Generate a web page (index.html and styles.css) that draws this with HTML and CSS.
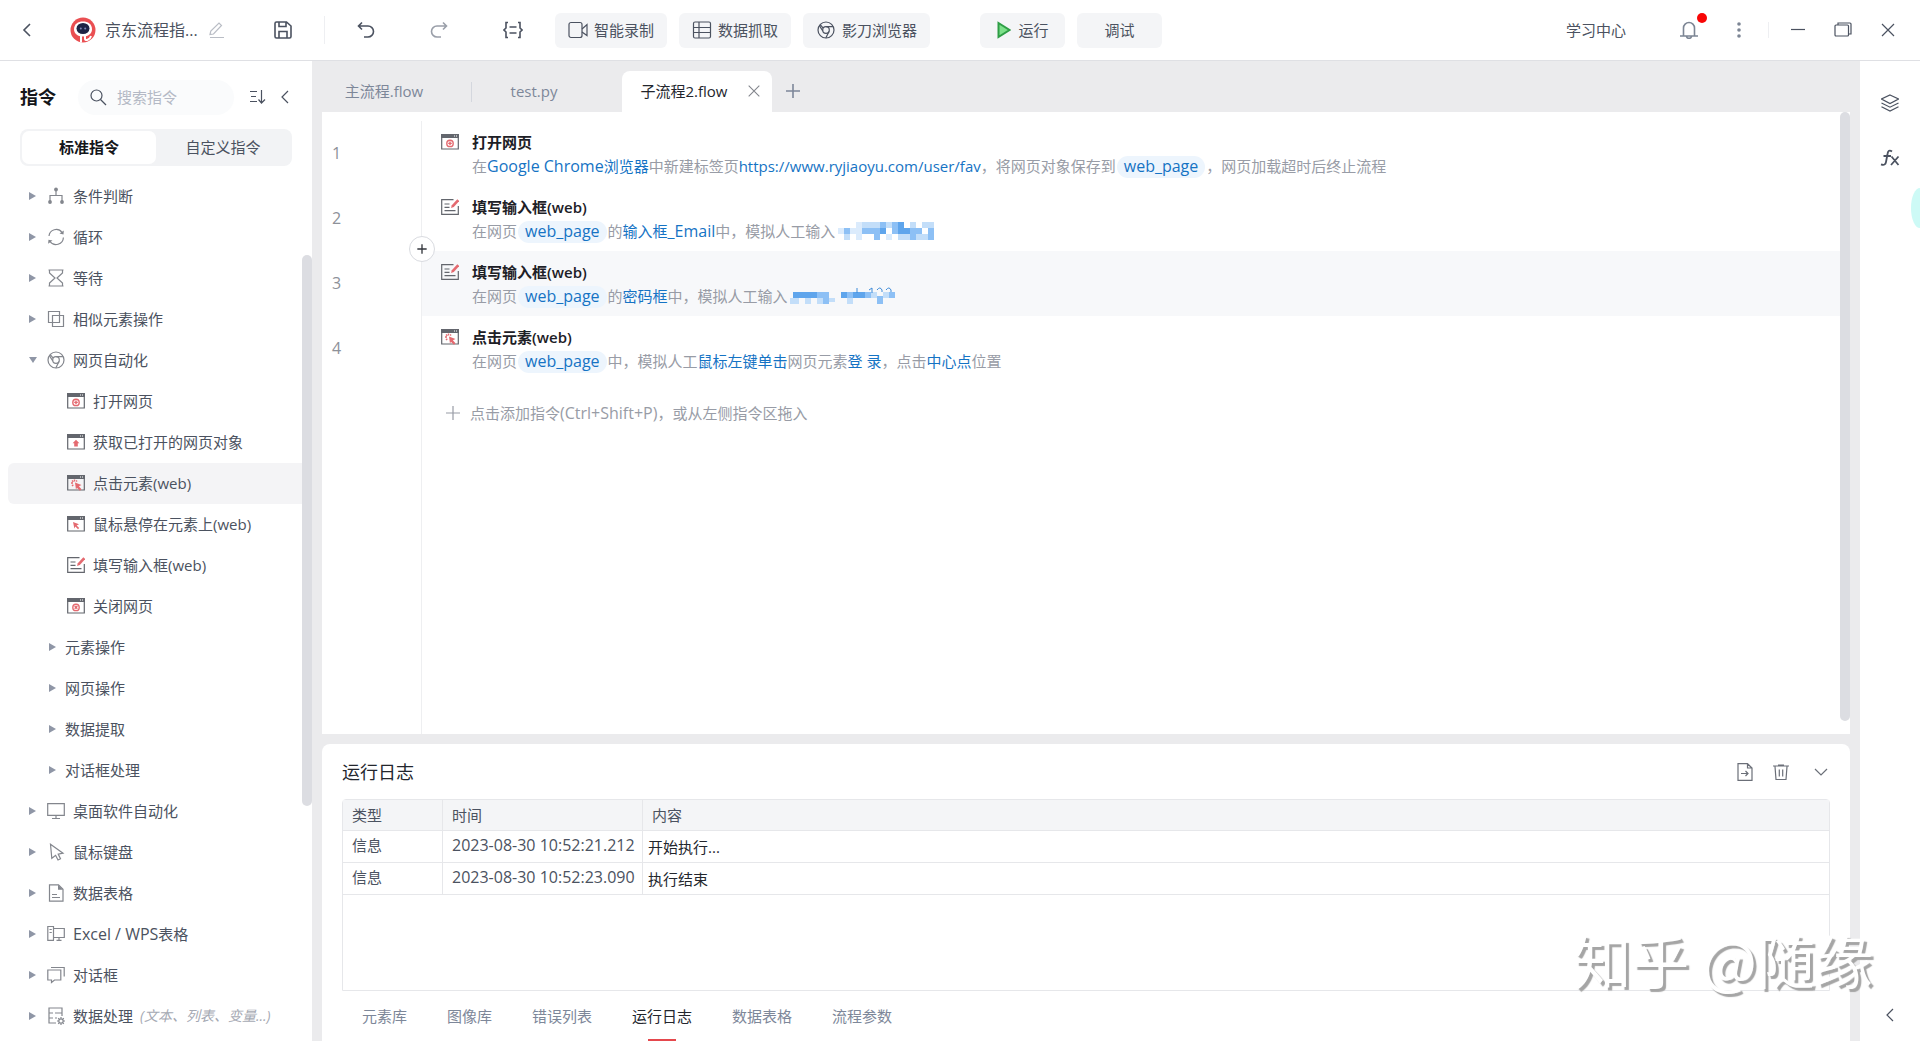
FILE: index.html
```html
<!DOCTYPE html>
<html lang="zh-CN">
<head>
  <meta charset="UTF-8">
  <meta name="viewport" content="width=device-width, initial-scale=1.0">
  <title>京东流程指令</title>
  <link rel="stylesheet" href="styles.css">
</head>
<body>

  <!-- Icon sprite -->
  <svg class="sprite" aria-hidden="true">
    <symbol id="i-left" viewBox="0 0 18 18"><path d="M12 3L6 9l6 6"/></symbol>
    <symbol id="i-down" viewBox="0 0 18 18"><path d="M3 6l6 6 6-6"/></symbol>
    <symbol id="i-close" viewBox="0 0 18 18"><path d="M3 3l12 12M15 3L3 15"/></symbol>
    <symbol id="i-plus" viewBox="0 0 18 18"><path d="M9 2v14M2 9h14"/></symbol>
    <symbol id="i-chrome" viewBox="0 0 18 18"><circle cx="9" cy="9" r="8"/><circle cx="9" cy="9" r="3.3"/><path d="M5.8 10L2.4 4.6M9 5.7h7.2M12 10.5L8.8 16.9M3.2 3.6L6 6.8"/></symbol>
    <symbol id="i-web" viewBox="0 0 18 18"><path d="M.7 2v14h16.6V2"/><path class="solid" d="M0 1h18v4H0z"/><path class="dots" d="M13 3h1M15 3h1"/></symbol>
    <symbol id="i-open" viewBox="0 0 18 18"><use href="#i-web"/><g class="red"><circle cx="9" cy="10.4" r="3.2"/><path d="M9 8.6v3.6M7.2 10.4h3.6"/></g></symbol>
    <symbol id="i-get" viewBox="0 0 18 18"><use href="#i-web"/><path class="redfill" d="M9 6.8l3.4 3.5h-1.6v3.2H7.2v-3.2H5.6z"/></symbol>
    <symbol id="i-click" viewBox="0 0 18 18"><use href="#i-web"/><path class="redfill" d="M8 8.5l6.5 2.5-2.6 1.2 2.6 3-1.6 1.6-3-3-.9 2z"/><path class="red" d="M7.5 5.5v2M4 9h2M5 6.5l1.3 1.3M10 6.5l-.8 1M5 12l1.3-1.3"/></symbol>
    <symbol id="i-hover" viewBox="0 0 18 18"><use href="#i-web"/><path class="redfill" d="M6 7l6 2.3-2.4 1.1 2.6 2.6-1.2 1.2-2.6-2.6-1 2z"/></symbol>
    <symbol id="i-shut" viewBox="0 0 18 18"><use href="#i-web"/><g class="red"><circle cx="9" cy="10.4" r="3.2"/><path d="M7.7 9.1l2.6 2.6M10.3 9.1l-2.6 2.6"/></g></symbol>
    <symbol id="i-fill" viewBox="0 0 18 18"><path d="M12.5 1.7H.7v14.6h16.6V8M3.5 6h5M3.5 9.3h5M3.5 12.6h11"/><path class="redfill" d="M10 10l.8-2.8 5.5-6 2 1.8-5.5 6z"/></symbol>
    <symbol id="i-branch" viewBox="0 0 18 18"><path d="M9 3v5M3 14V8.5h12V14"/><g class="solid"><circle cx="9" cy="2.5" r="1.9"/><circle cx="3" cy="15" r="1.9"/><circle cx="15" cy="15" r="1.9"/></g></symbol>
    <symbol id="i-loop" viewBox="0 0 18 18"><path d="M2 8a7.2 7.2 0 0 1 13-3.5M16.4 9.5a7.4 7.4 0 0 1-13.4 4"/><path class="solid" d="M12.5 5.5l4 1 .3-4zM5.5 12.5l-4-.8-.4 4z"/></symbol>
    <symbol id="i-wait" viewBox="0 0 18 18"><path d="M1.5 1h15M1.5 17h15M2.5 1v3L8 9l-5.5 5v3M15.5 1v3L10 9l5.5 5v3"/></symbol>
    <symbol id="i-same" viewBox="0 0 18 18"><path d="M1.5 1.5h11v11h-11zM5.500 5.500h11v11h-11z"/></symbol>
    <symbol id="i-desk" viewBox="0 0 18 18"><path d="M.7 1.7h16.6v11.6H.7zM9 13.3v3M5 16.5h8"/></symbol>
    <symbol id="i-mouse" viewBox="0 0 18 18"><path d="M3.5 1.2l12.5 9-4.8.9 2.3 4.6-2.5 1.3-2.4-4.7-3.8 3z"/></symbol>
    <symbol id="i-doc" viewBox="0 0 18 18"><path d="M2.5.8h9L16 5.3v11.9H2.5zM5 10.5h5M5 13.5h8"/><path class="solid" d="M11 .8v5h5z"/></symbol>
    <symbol id="i-excel" viewBox="0 0 18 18"><path d="M7 15.3H.8V1.5h5.7v13.8M2.5 4.5h2.3M2.5 7.5h2.3M6.5 3.5h10.8v9H6.5M12 12.5v3M9.5 15.3h5"/></symbol>
    <symbol id="i-talk" viewBox="0 0 18 18"><path d="M.8 4h13v10H7.5l-3 2.5V14H.8zM4 1.5h13.2v9"/></symbol>
    <symbol id="i-data" viewBox="0 0 18 18"><path d="M9 16H2V1h13v8M2 6h4M8 6h7M2 11h4M8 11h2"/><circle cx="14" cy="14" r="2.2"/><path d="M14 10v1.6M14 16.4V18M10 14h1.6M16.4 14H18M11.2 11.2l1 1M15.8 15.8l1 1M16.8 11.2l-1 1M12.2 15.8l-1 1"/></symbol>
  </svg>

  <header class="topbar">
    <div class="project">
      <button class="icon-btn" aria-label="返回"><svg class="ico bold"><use href="#i-left"/></svg></button>
      <svg class="logo" viewBox="0 0 26 26">
        <circle cx="13" cy="13" r="12.5" fill="#ea4f52"/>
        <path d="M4 12.5C4 7 8 4.500 13 4.500s9 2.500 9 8c0 3.500-3 7-9 7s-9-3.500-9-7z" fill="#fff"/>
        <ellipse cx="13" cy="11.5" rx="6.500" ry="5.500" fill="#1d2445"/>
        <circle cx="10.800" cy="11.500" r="1" fill="#7d88b8"/><circle cx="15.200" cy="11.500" r="1" fill="#7d88b8"/>
        <path d="M11 19v6.500M15 19v3c0 2 5 1 6-3" stroke="#fff" stroke-width="2" fill="none"/>
      </svg>
      <span class="project-name">京东流程指...</span>
      <button class="icon-btn edit" aria-label="重命名"><svg class="ico" viewBox="0 0 18 18"><path d="M3 13.500l.8-3.500L12 2l2.500 2.500L6.500 13zM3 16.500h14"/></svg></button>
    </div>
    <div class="history">
      <button class="icon-btn" aria-label="保存"><svg class="ico bold" viewBox="0 0 18 18"><path d="M3 1h9.500L17 5v10.500a1.500 1.500 0 0 1-1.500 1.500h-13A1.500 1.500 0 0 1 1 15.500v-13A1.500 1.500 0 0 1 2.500 1zM5 1v4.500h7V1M5 17v-6.500h8V17"/></svg></button>
      <span class="rule"></span>
      <button class="icon-btn" aria-label="撤销"><svg class="ico bold" viewBox="0 0 18 18"><path d="M5 1.500L1.500 5 5 8.500M1.500 5H11a5.500 5.500 0 0 1 0 11H7"/></svg></button>
      <button class="icon-btn muted" aria-label="重做"><svg class="ico bold" viewBox="0 0 18 18"><path d="M13 1.500L16.500 5 13 8.500M16.500 5H7a5.500 5.500 0 0 0 0 11h4"/></svg></button>
      <button class="icon-btn" aria-label="变量"><svg class="ico wide bold" viewBox="0 0 20 18"><path d="M5 1.500H3v5.500L1 9l2 2v5.500h2M15 1.500h2v5.500L19 9l-2 2v5.500h-2M6.500 6h7M6.500 12h7"/></svg></button>
    </div>
    <div class="tools">
      <button class="tool"><svg class="ico wide" viewBox="0 0 20 18"><rect x="1" y="1.500" width="13" height="15" rx="2"/><path d="M14 8l5-4.500v11L14 11"/></svg>智能录制</button>
      <button class="tool"><svg class="ico wide" viewBox="0 0 20 18"><rect x="1.500" y="1" width="17" height="16" rx="1.500"/><path d="M7 1v16M1.500 6.500h17M1.500 11.500h17"/></svg>数据抓取</button>
      <button class="tool"><svg class="ico wide"><use href="#i-chrome"/></svg>影刀浏览器</button>
    </div>
    <div class="tools">
      <button class="tool run"><svg class="play" viewBox="0 0 14 18"><path d="M1.500 2l11 7-11 7z"/></svg>运行</button>
      <button class="tool run">调试</button>
    </div>
    <div class="window">
      <a class="learn" href="#">学习中心</a>
      <button class="icon-btn bell" aria-label="通知"><svg class="ico bold" viewBox="0 0 18 18"><path d="M3.500 15V7a5.500 5.500 0 0 1 11 0v8M0 15h18M6.500 15.500a2.600 2.600 0 0 0 5 0"/></svg><span class="badge"></span></button>
      <button class="icon-btn more" aria-label="更多"><svg class="ico filled" viewBox="0 0 18 18"><circle cx="9" cy="3" r="1.800"/><circle cx="9" cy="9" r="1.800"/><circle cx="9" cy="15" r="1.800"/></svg></button>
      <span class="rule"></span>
      <button class="icon-btn" aria-label="最小化"><svg class="ico" viewBox="0 0 18 18"><path d="M2 8.500h14"/></svg></button>
      <button class="icon-btn" aria-label="还原"><svg class="ico" viewBox="0 0 18 18"><rect x="1" y="4" width="13.500" height="11" rx="1"/><path d="M4 4V2h12a1 1 0 0 1 1 1v10h-2.500"/></svg></button>
      <button class="icon-btn" aria-label="关闭"><svg class="ico"><use href="#i-close"/></svg></button>
    </div>
  </header>

  <div class="workspace">

    <!-- Command tree -->
    <aside class="sidebar">
      <div class="side-head">
        <h2>指令</h2>
        <label class="search">
          <svg class="ico" viewBox="0 0 18 18"><circle cx="7.500" cy="7.500" r="5.500"/><path d="M11.500 11.500L17 17"/></svg>
          <input type="text" placeholder="搜索指令" aria-label="搜索指令">
        </label>
        <button class="icon-btn" aria-label="排序"><svg class="ico" viewBox="0 0 18 18"><path d="M2 3.500h7M3 8.500h5M2 13.500h7M13.500 2v13M10.500 11.500l3 3.500 3.500-3.500"/></svg></button>
        <button class="icon-btn" aria-label="收起"><svg class="ico"><use href="#i-left"/></svg></button>
      </div>
      <div class="segment">
        <button class="active">标准指令</button>
        <button>自定义指令</button>
      </div>
      <div class="tree-wrap">
        <ul class="tree">
          <li><button><i class="caret"></i><svg class="ico"><use href="#i-branch"/></svg>条件判断</button></li>
          <li><button><i class="caret"></i><svg class="ico"><use href="#i-loop"/></svg>循环</button></li>
          <li><button><i class="caret"></i><svg class="ico"><use href="#i-wait"/></svg>等待</button></li>
          <li><button><i class="caret"></i><svg class="ico"><use href="#i-same"/></svg>相似元素操作</button></li>
          <li>
            <button><i class="caret open"></i><svg class="ico"><use href="#i-chrome"/></svg>网页自动化</button>
            <ul>
              <li><button class="leaf"><svg class="ico"><use href="#i-open"/></svg>打开网页</button></li>
              <li><button class="leaf"><svg class="ico"><use href="#i-get"/></svg>获取已打开的网页对象</button></li>
              <li><button class="leaf active"><svg class="ico"><use href="#i-click"/></svg>点击元素(web)</button></li>
              <li><button class="leaf"><svg class="ico"><use href="#i-hover"/></svg>鼠标悬停在元素上(web)</button></li>
              <li><button class="leaf"><svg class="ico"><use href="#i-fill"/></svg>填写输入框(web)</button></li>
              <li><button class="leaf"><svg class="ico"><use href="#i-shut"/></svg>关闭网页</button></li>
              <li><button class="group"><i class="caret"></i>元素操作</button></li>
              <li><button class="group"><i class="caret"></i>网页操作</button></li>
              <li><button class="group"><i class="caret"></i>数据提取</button></li>
              <li><button class="group"><i class="caret"></i>对话框处理</button></li>
            </ul>
          </li>
          <li><button><i class="caret"></i><svg class="ico"><use href="#i-desk"/></svg>桌面软件自动化</button></li>
          <li><button><i class="caret"></i><svg class="ico"><use href="#i-mouse"/></svg>鼠标键盘</button></li>
          <li><button><i class="caret"></i><svg class="ico"><use href="#i-doc"/></svg>数据表格</button></li>
          <li><button><i class="caret"></i><svg class="ico"><use href="#i-excel"/></svg><span class="latin">Excel / WPS</span>表格</button></li>
          <li><button><i class="caret"></i><svg class="ico"><use href="#i-talk"/></svg>对话框</button></li>
          <li><button><i class="caret"></i><svg class="ico"><use href="#i-data"/></svg>数据处理<em>(文本、列表、变量...)</em></button></li>
        </ul>
        <span class="scrollbar side-scroll"></span>
      </div>
    </aside>

    <main class="main">
      <nav class="tabs">
        <button class="tab"><span>主流程.flow</span></button>
        <button class="tab"><span>test.py</span></button>
        <button class="tab active"><span>子流程2.flow</span><svg class="ico small"><use href="#i-close"/></svg></button>
        <button class="icon-btn add-tab" aria-label="新建"><svg class="ico bold"><use href="#i-plus"/></svg></button>
      </nav>

      <!-- Flow editor -->
      <section class="editor">
        <ol class="steps">
          <li class="step">
            <span class="num">1</span>
            <div class="body">
              <svg class="ico"><use href="#i-open"/></svg>
              <div>
                <h3>打开网页</h3>
                <p>在<a class="latin" href="#">Google Chrome</a><a href="#">浏览器</a>中新建标签页<a href="#">https://www.ryjiaoyu.com/user/fav</a>，将网页对象保存到<a class="var" href="#">web_page</a>，网页加载超时后终止流程</p>
              </div>
            </div>
          </li>
          <li class="step">
            <span class="num">2</span>
            <div class="body">
              <svg class="ico"><use href="#i-fill"/></svg>
              <div>
                <h3>填写输入框(web)</h3>
                <p>在网页<a class="var" href="#">web_page</a>的<a href="#">输入框</a><a class="latin" href="#">_Email</a>中，模拟人工输入<svg class="mosaic" viewBox="0 0 108 18">
                  <path fill="#dbebfc" d="M3 6h6v6H3zM15 6h6v6h-6zM21 0h6v18h-6zM51 12h6v6h-6z"/>
                  <path fill="#c3def9" d="M9 12h6v6H9zM27 0h6v6h-6zM33 0h12v6H33zM51 0h6v6h-6zM63 12h12v6H63zM75 0h6v6h-6zM81 12h12v6H81zM87 0h12v6H87z"/>
                  <path fill="#8dc0f5" d="M9 6h6v6H9zM27 6h12v6H27zM39 6h6v12h-6zM45 0h6v6h-6zM57 0h6v12h-6zM75 6h6v12h-6zM81 6h6v6h-6zM93 6h6v12h-6z"/>
                  <path fill="#5fa5ec" d="M45 6h6v6h-6zM63 6h12v6H63zM63 0h6v6h-6z"/>
                </svg></p>
              </div>
            </div>
          </li>
          <li class="step hover">
            <button class="insert" aria-label="插入指令"><svg class="ico bold"><use href="#i-plus"/></svg></button>
            <span class="num">3</span>
            <div class="body">
              <svg class="ico"><use href="#i-fill"/></svg>
              <div>
                <h3>填写输入框(web)</h3>
                <p>在网页<a class="var" href="#">web_page</a>的<a href="#">密码框</a>中，模拟人工输入<svg class="mosaic" viewBox="0 0 108 18">
                  <path fill="#c3def9" d="M2 11h9v6H2zM17 11h6v6h-6zM29 11h6v6h-6zM41 11h6v4h-6zM59 11h6v6h-6zM83 5h6v6h-6zM95 5h6v6h-6z"/>
                  <path fill="#8dc0f5" d="M29 5h12v12h-6v-6h-6zM59 5h6v6h-6zM77 5h6v6h-6zM89 9h6v8h-6zM101 5h6v6h-6z"/>
                  <path fill="#5fa5ec" d="M5 5h24v6H5zM53 5h6v6h-6zM65 5h12v6H65z"/>
                  <path d="M69 1v5M81 3l3-2v5M89 3q3-4 5 0v2M98 3q3-4 5 0v2" stroke="#3d8ad8" fill="none"/>
                </svg></p>
              </div>
            </div>
          </li>
          <li class="step">
            <span class="num">4</span>
            <div class="body">
              <svg class="ico"><use href="#i-click"/></svg>
              <div>
                <h3>点击元素(web)</h3>
                <p>在网页<a class="var" href="#">web_page</a>中，模拟人工<a href="#">鼠标左键单击</a>网页元素<a href="#">登 录</a>，点击<a href="#">中心点</a>位置</p>
              </div>
            </div>
          </li>
        </ol>
        <button class="add-step"><svg class="ico"><use href="#i-plus"/></svg><span>点击添加指令<span class="latin">(Ctrl+Shift+P)</span>，或从左侧指令区拖入</span></button>
        <span class="scrollbar editor-scroll"></span>
      </section>

      <!-- Run log -->
      <section class="log">
        <div class="log-head">
          <h2>运行日志</h2>
          <button class="icon-btn" aria-label="导出"><svg class="ico" viewBox="0 0 18 18"><path d="M2 .7h9.500L16 5v12.300H2zM11.500.7V5H16M5 10.500h7M9.500 8l2.500 2.500L9.500 13"/></svg></button>
          <button class="icon-btn" aria-label="清空"><svg class="ico" viewBox="0 0 18 18"><path d="M1 3h16M6 2h6M3 3.500l1 13h10l1-13M7.300 6.500v7M10.700 6.500v7"/></svg></button>
          <button class="icon-btn" aria-label="折叠"><svg class="ico"><use href="#i-down"/></svg></button>
        </div>
        <div class="table-box">
          <table>
            <thead>
              <tr><th class="c-type">类型</th><th class="c-time">时间</th><th>内容</th></tr>
            </thead>
            <tbody>
              <tr><td>信息</td><td class="latin">2023-08-30 10:52:21.212</td><td class="msg">开始执行...</td></tr>
              <tr><td>信息</td><td class="latin">2023-08-30 10:52:23.090</td><td class="msg">执行结束</td></tr>
            </tbody>
          </table>
        </div>
        <nav class="log-tabs">
          <button>元素库</button>
          <button>图像库</button>
          <button>错误列表</button>
          <button class="active">运行日志</button>
          <button>数据表格</button>
          <button>流程参数</button>
        </nav>
      </section>
    </main>

    <aside class="rail">
      <button class="icon-btn" aria-label="图层"><svg class="ico" viewBox="0 0 18 18"><path d="M9 1l8.500 4L9 9.500.5 5zM.5 9L9 13.200 17.500 9M.5 12.800L9 17l8.500-4.200"/></svg></button>
      <button class="icon-btn" aria-label="函数"><svg class="ico fx" viewBox="0 0 20 18"><path d="M12 2.500C9.500.5 8 2 7.600 4.500L6 13c-.4 2.500-2 3.500-5 2.300M3.500 7h7.500M11.500 7.500l7 8.500M18.500 7.500L11 16"/></svg></button>
      <button class="icon-btn rail-toggle" aria-label="展开"><svg class="ico"><use href="#i-left"/></svg></button>
      <span class="bubble"></span>
    </aside>
  </div>

  <div class="watermark">知乎 @随缘</div>

</body>
</html>
```
FILE: styles.css
```css
* {
  margin: 0;
  padding: 0;
  box-sizing: border-box;
}

body {
  height: 100vh;
  display: flex;
  flex-direction: column;
  overflow: hidden;
  background: #ebebed;
  color: #4b5260;
  font-family: "Open Sans", "Noto Sans CJK SC", sans-serif;
  font-size: 15px;
  line-height: 20px;
}

button {
  border: none;
  background: none;
  color: inherit;
  font: inherit;
  cursor: pointer;
}

a {
  color: #1573c4;
  text-decoration: none;
}

ul,
ol {
  list-style: none;
}

.sprite {
  position: absolute;
  width: 0;
  height: 0;
}

/* Icons */
.ico {
  flex: none;
  width: 18px;
  height: 18px;
  display: block;
  fill: none;
  stroke: currentColor;
  stroke-width: 1.2;
}

.ico.bold {
  stroke-width: 1.6;
}

.ico.wide {
  width: 20px;
}

.ico.small {
  width: 16px;
  height: 16px;
}

.ico.filled,
.solid {
  fill: currentColor;
  stroke: none;
}

.dots {
  stroke: #fff;
}

.red {
  stroke: #e46a70;
  stroke-width: 1.4;
}

.redfill {
  fill: #e46a70;
  stroke: none;
}

.icon-btn {
  display: flex;
  align-items: center;
  justify-content: center;
}

/* Top bar */
.topbar {
  flex: none;
  height: 61px;
  display: flex;
  align-items: center;
  background: #fff;
  border-bottom: 1px solid #dfe0e4;
}

.project {
  display: flex;
  align-items: center;
  width: 256px;
  padding-left: 18px;
}

.logo {
  width: 26px;
  height: 26px;
  margin-left: 34px;
}

.project-name {
  margin: 0 9px;
  font-size: 16px;
  white-space: nowrap;
}

.edit {
  color: #b9bdc5;
}

.history {
  display: flex;
  align-items: center;
  gap: 55px;
  padding-left: 18px;
}

.rule {
  width: 1px;
  height: 28px;
  background: #eeeff2;
}

.history .rule {
  margin: 0 -23px;
}

.muted {
  color: #9a9fa9;
}

.tools {
  display: flex;
  gap: 12px;
  margin-left: 32px;
}

.tools + .tools {
  margin-left: 50px;
}

.tool {
  display: flex;
  align-items: center;
  justify-content: center;
  gap: 6px;
  height: 35px;
  padding: 0 13px;
  border-radius: 6px;
  background: #f4f5f7;
}

.tool.run {
  width: 85px;
  gap: 8px;
}

.play {
  width: 14px;
  height: 18px;
  fill: #7de08a;
  stroke: #2e9e46;
  stroke-width: 2;
}

.window {
  display: flex;
  align-items: center;
  margin-left: auto;
  padding-right: 23px;
}

.learn {
  margin-right: 54px;
  color: inherit;
}

.bell {
  position: relative;
  margin-right: 32px;
  color: #7c8594;
}

.more {
  color: #7c8594;
}

.badge {
  position: absolute;
  top: -8px;
  right: -9px;
  width: 10px;
  height: 10px;
  border-radius: 50%;
  background: #f80606;
}

.window .rule {
  margin: 0 20px;
  height: 16px;
}

.window .rule ~ .icon-btn + .icon-btn {
  margin-left: 27px;
}

/* Workspace */
.workspace {
  flex: 1;
  min-height: 0;
  display: flex;
}

.sidebar {
  flex: none;
  width: 312px;
  display: flex;
  flex-direction: column;
  background: #fff;
}

.side-head {
  display: flex;
  align-items: center;
  gap: 10px;
  height: 36px;
  margin: 18px 16px 14px 20px;
}

.side-head h2 {
  flex: none;
  width: 48px;
  color: #14161a;
  font-size: 18px;
}

.search {
  display: flex;
  align-items: center;
  gap: 10px;
  width: 156px;
  height: 35px;
  margin-right: 4px;
  padding: 0 11px;
  border-radius: 18px;
  background: #fafbfc;
}

.search input {
  width: 100%;
  border: none;
  outline: none;
  background: none;
  font: inherit;
}

.search input::placeholder {
  color: #b4b9c5;
}

.segment {
  display: flex;
  height: 37px;
  margin: 0 20px 10px;
  padding: 2px;
  border-radius: 8px;
  background: #f2f3f5;
}

.segment button {
  flex: 1;
  padding-bottom: 2px;
  border-radius: 7px;
}

.segment .active {
  background: #fff;
  color: #14161a;
  font-weight: 600;
}

.tree-wrap {
  position: relative;
  flex: 1;
  min-height: 0;
  overflow: hidden;
}

.tree button {
  display: flex;
  align-items: center;
  width: 294px;
  height: 41px;
  margin-left: 8px;
  padding: 0 0 2px 21px;
  border-radius: 6px 0 0 6px;
  white-space: nowrap;
}

.tree .ico {
  margin-right: 8px;
  color: #83868d;
}

.tree .leaf {
  padding-left: 59px;
}

.tree .leaf .ico {
  color: #63666d;
}

.tree .group {
  padding-left: 41px;
}

.tree .group .caret {
  margin-right: 9px;
}

.tree .active {
  background: #f4f4f6;
}

.tree em {
  margin-left: 7px;
  color: #a5a9b3;
  font-size: 14px;
}

.caret {
  border-left: 7px solid #8f96a6;
  border-top: 4px solid transparent;
  border-bottom: 4px solid transparent;
  margin-right: 11px;
}

.caret.open {
  border: 4px solid transparent;
  border-top: 6px solid #8f96a6;
  border-bottom: none;
  margin-right: 10px;
}

.scrollbar {
  position: absolute;
  right: 0;
  width: 10px;
  border-radius: 5px;
  background: #dcdde2;
}

.side-scroll {
  top: 79px;
  bottom: 235px;
}

/* Main column */
.main {
  flex: 1;
  min-width: 0;
  display: flex;
  flex-direction: column;
  padding: 0 10px;
}

.tabs {
  flex: none;
  display: flex;
  align-items: center;
  height: 51px;
  padding-top: 10px;
  color: #7d8799;
}

.tab {
  display: flex;
  align-items: center;
  width: 150px;
  height: 41px;
  padding-bottom: 2px;
}

.tab span {
  width: 124px;
  text-align: center;
}

.tab:first-child {
  background: linear-gradient(#d4d7de, #d4d7de) right center / 1px 20px no-repeat;
}

.tab.active {
  border-radius: 8px 8px 0 0;
  background: #fff;
  color: #23262d;
}

.tab .ico {
  color: #82858c;
}

.add-tab {
  margin-left: 12px;
  padding-bottom: 2px;
}

/* Editor */
.editor {
  position: relative;
  flex: 1;
  min-height: 0;
  padding: 9px 10px 0 0;
  background: linear-gradient(#eeeff1, #eeeff1) 99px 9px / 1px 100% no-repeat #fff;
}

.step {
  position: relative;
  display: flex;
  height: 65px;
}

.num {
  width: 100px;
  padding: 22px 10px 0;
  color: #8d9199;
  font-size: 16px;
}

.body {
  flex: 1;
  display: flex;
  gap: 13px;
  padding: 10px 19px 0;
}

.body .ico {
  margin-top: 2px;
  color: #63666d;
}

.hover .body {
  background: #f7f8fa;
}

.step h3 {
  color: #1d2026;
  font-size: 15px;
  font-weight: 600;
  line-height: 22px;
}

.step p {
  display: flex;
  align-items: center;
  height: 26px;
  color: #989ca6;
  white-space: nowrap;
}

.latin {
  font-size: 16px;
}

.var {
  height: 22px;
  margin: 2px 1px 0;
  padding: 0 7px;
  border-radius: 11px;
  background: #edf5fd;
  font-size: 16px;
}

.mosaic {
  width: 108px;
  height: 18px;
}

.insert {
  position: absolute;
  top: -15px;
  left: 87px;
  width: 26px;
  height: 26px;
  padding: 6px;
  border: 1px solid #d9dbe0;
  border-radius: 50%;
  background: #fff;
  color: #33363c;
}

.insert .ico {
  width: 12px;
  height: 12px;
  stroke-width: 2;
}

.add-step {
  display: flex;
  align-items: center;
  gap: 8px;
  height: 44px;
  margin: 10px 0 0 122px;
  color: #989ca6;
}

.editor-scroll {
  top: 0;
  bottom: 13px;
}

/* Log panel */
.log {
  flex: none;
  display: flex;
  flex-direction: column;
  height: 297px;
  margin-top: 10px;
  padding: 0 20px;
  border-radius: 8px 8px 0 0;
  background: #fff;
}

.log-head {
  display: flex;
  align-items: center;
  gap: 18px;
  height: 55px;
  color: #6b6f78;
}

.log-head h2 {
  flex: 1;
  color: #23262d;
  font-size: 18px;
  font-weight: 400;
}

.log-head .icon-btn:last-child {
  margin-left: 4px;
}

.table-box {
  flex: 1;
  border: 1px solid #e6e7ea;
  border-radius: 4px 4px 0 0;
}

table {
  width: 100%;
  border-spacing: 0;
  table-layout: fixed;
}

th,
td {
  height: 32px;
  padding: 0 9px;
  border-right: 1px solid #e6e7ea;
  border-bottom: 1px solid #e6e7ea;
  font-weight: 400;
  text-align: left;
  white-space: nowrap;
}

th {
  height: 31px;
  background: #f4f5f7;
}

td {
  padding-bottom: 3px;
}

th:last-child,
td:last-child {
  border-right: none;
}

.c-type {
  width: 100px;
}

.c-time {
  width: 200px;
}

td.msg {
  padding: 0 5px;
  color: #23262d;
}

.log-tabs {
  display: flex;
  gap: 40px;
  height: 50px;
  padding-left: 20px;
  color: #7d8799;
}

.log-tabs .active {
  background: linear-gradient(#e5484d, #e5484d) center bottom / 28px 2px no-repeat;
  color: #23262d;
}

/* Right rail */
.rail {
  position: relative;
  flex: none;
  width: 60px;
  display: flex;
  flex-direction: column;
  align-items: center;
  gap: 37px;
  padding: 33px 0 17px;
  background: #fff;
}

.fx {
  width: 20px;
  stroke-width: 1.8;
}

.rail-toggle {
  margin-top: auto;
}

.bubble {
  position: absolute;
  top: 127px;
  left: 51px;
  width: 9px;
  height: 40px;
  border-radius: 9px 0 0 9px / 20px 0 0 20px;
  background: #cdfaf6;
}

.watermark {
  position: absolute;
  right: 47px;
  bottom: 46px;
  color: #fff;
  font-family: "Noto Sans CJK SC", sans-serif;
  font-size: 58px;
  line-height: 72px;
  text-shadow: 3px 3px 1px #a5a5a5;
}
```
